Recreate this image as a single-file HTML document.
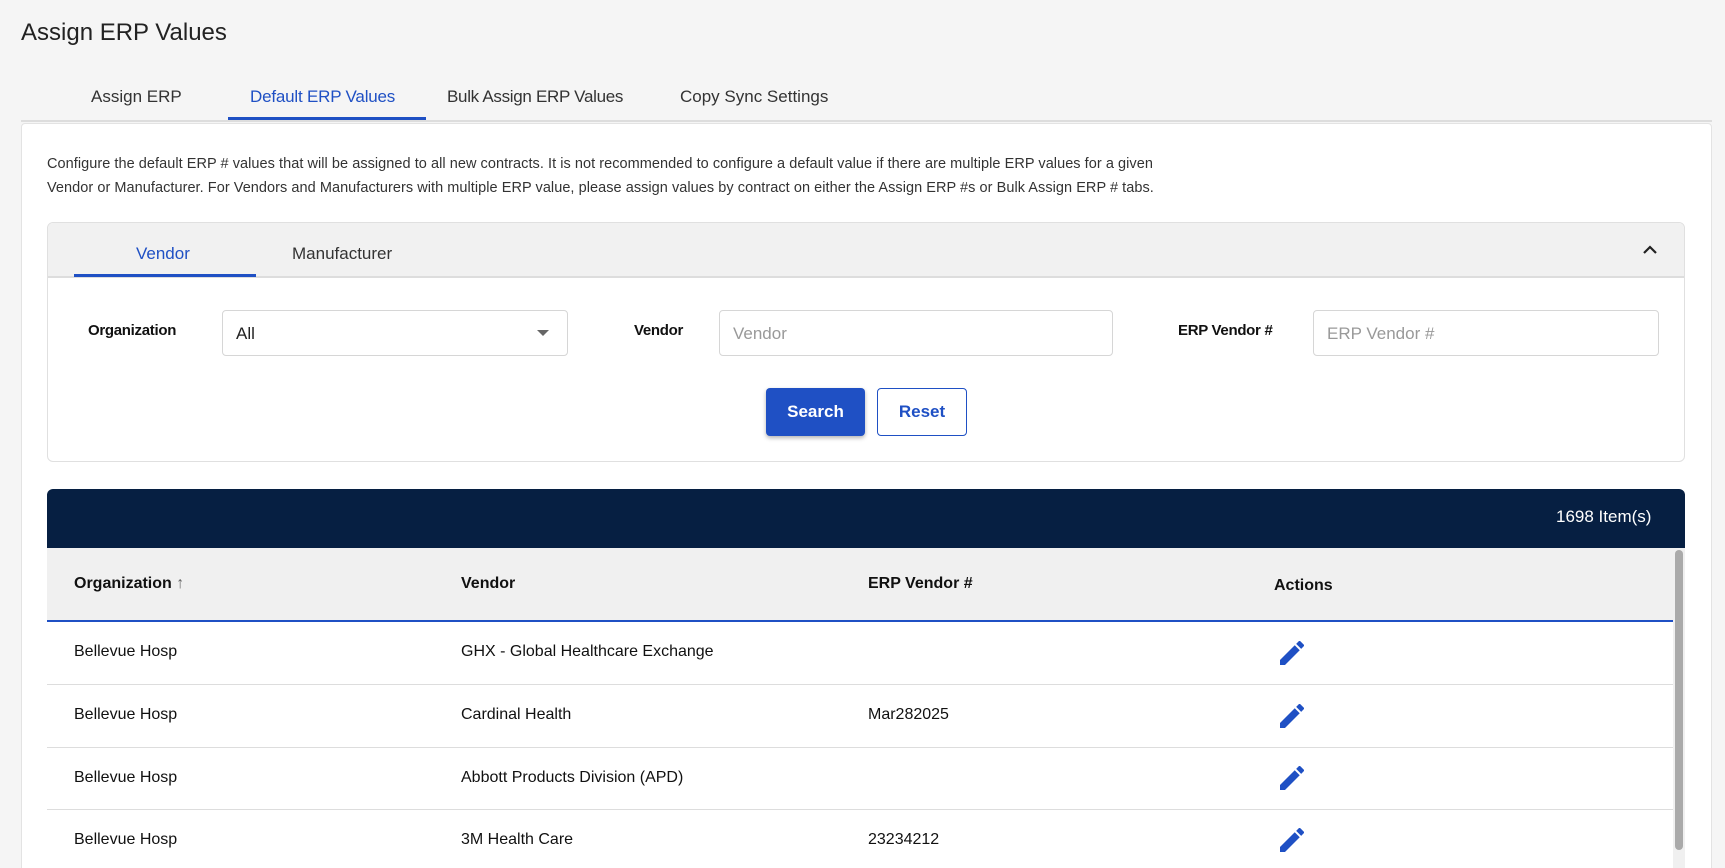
<!DOCTYPE html>
<html><head><meta charset="utf-8"><style>
*{box-sizing:border-box;margin:0;padding:0}
html{width:1725px;height:868px;overflow:hidden}
body{width:1725px;height:868px;overflow:hidden;background:#f5f5f5;font-family:"Liberation Sans",Arial,sans-serif;color:#222;position:relative}
.a{position:absolute;white-space:nowrap}
.tab{font-size:17px;color:#333;top:87px}
.lbl{font-size:15px;font-weight:bold;color:#111;top:322px;letter-spacing:-0.3px}
.inp{position:absolute;top:310px;height:46px;border:1px solid #d6d6d6;border-radius:4px;background:#fff;font-size:17px;color:#999;padding:13px 13px}
.th{font-size:16px;font-weight:bold;color:#111}
.td{font-size:16px;color:#111}
.row{position:absolute;left:47px;width:1626px;height:1px;background:#ddd}
</style></head><body>
<div class="a" style="left:21px;top:19px;font-size:24px;color:#222">Assign ERP Values</div>
<div class="a tab" style="left:91px">Assign ERP</div>
<div class="a tab" style="left:250px;color:#1f50c4;letter-spacing:-0.2px">Default ERP Values</div>
<div class="a tab" style="left:447px;letter-spacing:-0.3px">Bulk Assign ERP Values</div>
<div class="a tab" style="left:680px">Copy Sync Settings</div>
<div class="a" style="left:21px;top:120px;width:1691px;height:2px;background:#ddd"></div>
<div class="a" style="left:228px;top:117px;width:198px;height:3px;background:#1f50c4"></div>
<div class="a" style="left:21px;top:123px;width:1691px;height:760px;background:#fff;border:1px solid #e3e3e3;border-radius:4px"></div>
<div class="a" style="left:47px;top:152px;font-size:14.5px;line-height:24px;color:#333;letter-spacing:0.05px">Configure the default ERP # values that will be assigned to all new contracts. It is not recommended to configure a default value if there are multiple ERP values for a given<br>Vendor or Manufacturer. For Vendors and Manufacturers with multiple ERP value, please assign values by contract on either the Assign ERP #s or Bulk Assign ERP # tabs.</div>
<div class="a" style="left:47px;top:222px;width:1638px;height:240px;border:1px solid #e0e0e0;border-radius:6px;background:#fff;overflow:hidden">
 <div style="height:55px;background:#f1f1f1;border-bottom:2px solid #ddd;position:relative">
  <div class="a" style="left:88px;top:21px;font-size:17px;color:#1f50c4">Vendor</div>
  <div class="a" style="left:244px;top:21px;font-size:17px;color:#333">Manufacturer</div>
  <div class="a" style="left:26px;top:51px;width:182px;height:3px;background:#1f50c4"></div>
  <svg class="a" style="left:1594px;top:20px" width="16" height="12" viewBox="0 0 16 12"><path d="M2 10L8 4L14 10" stroke="#222" stroke-width="2.2" fill="none"/></svg>
 </div>
</div>
<div class="a lbl" style="left:88px">Organization</div>
<div class="inp" style="left:222px;width:346px;color:#222">All<span style="position:absolute;right:18px;top:19px;width:0;height:0;border-left:6px solid transparent;border-right:6px solid transparent;border-top:6px solid #666"></span></div>
<div class="a lbl" style="left:634px">Vendor</div>
<div class="inp" style="left:719px;width:394px">Vendor</div>
<div class="a lbl" style="left:1178px">ERP Vendor #</div>
<div class="inp" style="left:1313px;width:346px">ERP Vendor #</div>
<div class="a" style="left:766px;top:388px;width:99px;height:48px;background:#1f50c4;border-radius:4px;box-shadow:0 2px 4px rgba(0,0,0,.3);color:#fff;font-size:17px;font-weight:bold;text-align:center;line-height:48px">Search</div>
<div class="a" style="left:877px;top:388px;width:90px;height:48px;border:1px solid #1f50c4;border-radius:4px;color:#1f50c4;font-size:17px;font-weight:bold;text-align:center;line-height:46px">Reset</div>
<div class="a" style="left:47px;top:489px;width:1638px;height:59px;background:#061f42;border-radius:6px 6px 0 0"></div>
<div class="a" style="left:1556px;top:507px;font-size:17px;color:#fff">1698 Item(s)</div>
<div class="a" style="left:47px;top:548px;width:1626px;height:73px;background:#f0f0f0"></div>
<div class="a" style="left:47px;top:620px;width:1626px;height:2px;background:#1f50c4"></div>
<div class="a th" style="left:74px;top:575px">Organization <span style="color:#666">&#8593;</span></div>
<div class="a th" style="left:461px;top:575px">Vendor</div>
<div class="a th" style="left:868px;top:575px">ERP Vendor #</div>
<div class="a th" style="left:1274px;top:577px">Actions</div>
<div class="row" style="top:684px"></div><div class="row" style="top:747px"></div><div class="row" style="top:809px"></div>
<div class="a td" style="left:74px;top:643px">Bellevue Hosp</div><div class="a td" style="left:461px;top:643px">GHX - Global Healthcare Exchange</div>
<div class="a td" style="left:74px;top:706px">Bellevue Hosp</div><div class="a td" style="left:461px;top:706px">Cardinal Health</div><div class="a td" style="left:868px;top:706px">Mar282025</div>
<div class="a td" style="left:74px;top:769px">Bellevue Hosp</div><div class="a td" style="left:461px;top:769px">Abbott Products Division (APD)</div>
<div class="a td" style="left:74px;top:831px">Bellevue Hosp</div><div class="a td" style="left:461px;top:831px">3M Health Care</div><div class="a td" style="left:868px;top:831px">23234212</div>
<svg class="a" style="left:1280px;top:641px" width="24" height="24" viewBox="3 3 18 18"><path fill="#1f50c4" d="M3 17.25V21h3.75L17.81 9.94l-3.75-3.75L3 17.25zM20.71 7.04a1 1 0 000-1.41l-2.34-2.34a1 1 0 00-1.41 0l-1.83 1.83 3.75 3.75 1.83-1.83z"/></svg>
<svg class="a" style="left:1280px;top:704px" width="24" height="24" viewBox="3 3 18 18"><path fill="#1f50c4" d="M3 17.25V21h3.75L17.81 9.94l-3.75-3.75L3 17.25zM20.71 7.04a1 1 0 000-1.41l-2.34-2.34a1 1 0 00-1.41 0l-1.83 1.83 3.75 3.75 1.83-1.83z"/></svg>
<svg class="a" style="left:1280px;top:766px" width="24" height="24" viewBox="3 3 18 18"><path fill="#1f50c4" d="M3 17.25V21h3.75L17.81 9.94l-3.75-3.75L3 17.25zM20.71 7.04a1 1 0 000-1.41l-2.34-2.34a1 1 0 00-1.41 0l-1.83 1.83 3.75 3.75 1.83-1.83z"/></svg>
<svg class="a" style="left:1280px;top:828px" width="24" height="24" viewBox="3 3 18 18"><path fill="#1f50c4" d="M3 17.25V21h3.75L17.81 9.94l-3.75-3.75L3 17.25zM20.71 7.04a1 1 0 000-1.41l-2.34-2.34a1 1 0 00-1.41 0l-1.83 1.83 3.75 3.75 1.83-1.83z"/></svg>
<div class="a" style="left:1673px;top:548px;width:12px;height:320px;background:#f0f0f0"></div>
<div class="a" style="left:1675px;top:550px;width:8px;height:300px;background:#aaa;border-radius:4px"></div>
</body></html>
